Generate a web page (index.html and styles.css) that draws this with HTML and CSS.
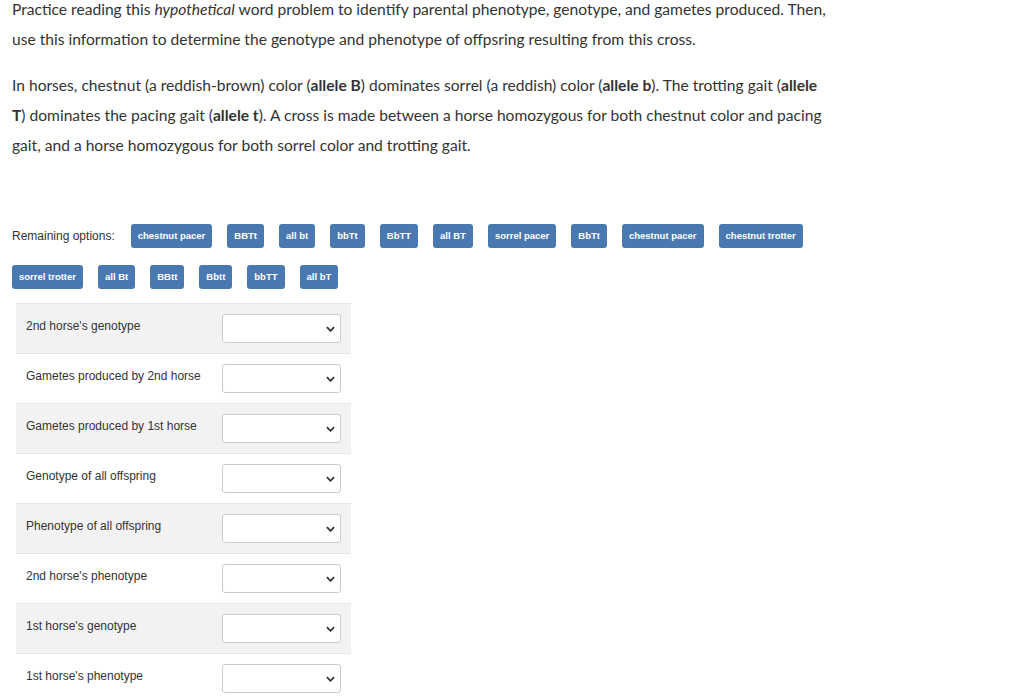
FILE: index.html
```html
<!DOCTYPE html>
<html lang="en">
<head>
    <meta charset="UTF-8">
    <meta name="viewport" content="width=device-width, initial-scale=1.0">
    <title>Horse cross</title>
    <link rel="stylesheet" href="styles.css">
</head>
<body>
<div class="problem">
    <p>Practice reading this <em>hypothetical</em> word problem to identify parental phenotype, genotype, and gametes produced. Then, use this information to determine the genotype and phenotype of offpsring resulting from this cross.</p>
    <p>In horses, chestnut (a reddish-brown) color (<b>allele B</b>) dominates sorrel (a reddish) color (<b>allele b</b>). The trotting gait (<b>allele T</b>) dominates the pacing gait (<b>allele t</b>). A cross is made between a horse homozygous for both chestnut color and pacing gait, and a horse homozygous for both sorrel color and trotting gait.</p>
</div>

<div class="options">
    <span class="options-label">Remaining options:</span>
    <span class="chip">chestnut pacer</span>
    <span class="chip">BBTt</span>
    <span class="chip">all bt</span>
    <span class="chip">bbTt</span>
    <span class="chip">BbTT</span>
    <span class="chip">all BT</span>
    <span class="chip">sorrel pacer</span>
    <span class="chip">BbTt</span>
    <span class="chip">chestnut pacer</span>
    <span class="chip">chestnut trotter</span>
    <span class="chip">sorrel trotter</span>
    <span class="chip">all Bt</span>
    <span class="chip">BBtt</span>
    <span class="chip">Bbtt</span>
    <span class="chip">bbTT</span>
    <span class="chip">all bT</span>
</div>

<table class="answers">
    <tr><td class="question">2nd horse's genotype</td><td><div class="pick"><select></select><svg viewBox="0 0 10 6"><path d="M1 1l4 4 4-4" /></svg></div></td></tr>
    <tr><td class="question">Gametes produced by 2nd horse</td><td><div class="pick"><select></select><svg viewBox="0 0 10 6"><path d="M1 1l4 4 4-4" /></svg></div></td></tr>
    <tr><td class="question">Gametes produced by 1st horse</td><td><div class="pick"><select></select><svg viewBox="0 0 10 6"><path d="M1 1l4 4 4-4" /></svg></div></td></tr>
    <tr><td class="question">Genotype of all offspring</td><td><div class="pick"><select></select><svg viewBox="0 0 10 6"><path d="M1 1l4 4 4-4" /></svg></div></td></tr>
    <tr><td class="question">Phenotype of all offspring</td><td><div class="pick"><select></select><svg viewBox="0 0 10 6"><path d="M1 1l4 4 4-4" /></svg></div></td></tr>
    <tr><td class="question">2nd horse's phenotype</td><td><div class="pick"><select></select><svg viewBox="0 0 10 6"><path d="M1 1l4 4 4-4" /></svg></div></td></tr>
    <tr><td class="question">1st horse's genotype</td><td><div class="pick"><select></select><svg viewBox="0 0 10 6"><path d="M1 1l4 4 4-4" /></svg></div></td></tr>
    <tr><td class="question">1st horse's phenotype</td><td><div class="pick"><select></select><svg viewBox="0 0 10 6"><path d="M1 1l4 4 4-4" /></svg></div></td></tr>
</table>
</body>
</html>
```

FILE: styles.css
```css
body{
    margin: 0;
    padding: 0 12px;
    color: #333;
    font-family: Lato, "Open Sans", sans-serif;
}
.problem{
    margin-top: -6px;
    width: 818px;
    font-size: 15.6px;
    line-height: 30px;
}
.problem p{
    margin: 0 0 16px;
}
.problem b{
    font-weight: 700;
}

.options{
    display: flex;
    flex-wrap: wrap;
    align-items: center;
    row-gap: 17px;
    column-gap: 15px;
    width: 800px;
    margin-top: 64px;
    font-family: "Liberation Sans", Arial, sans-serif;
}
.options-label{
    font-size: 12px;
    margin-right: 1px;
}
.chip{
    display: inline-block;
    padding: 0 7px;
    height: 24px;
    line-height: 24px;
    background-color: #4a79b1;
    color: white;
    font-size: 9.5px;
    font-weight: bold;
    border-radius: 3px;
}

.answers{
    border-collapse: collapse;
    margin: 14px 0 0 4px;
    width: 335px;
    font-family: "Liberation Sans", Arial, sans-serif;
    font-size: 12px;
}
.answers tr{
    height: 50px;
    border-top: 1px solid #e6e6e6;
}
.answers tr:nth-child(odd){
    background-color: #f2f2f2;
}
.answers td{
    padding: 0 10px;
    vertical-align: middle;
}
.answers .question{
    width: 186px;
    padding-bottom: 6px;
    white-space: nowrap;
}
.pick{
    position: relative;
    width: 119px;
    height: 29px;
}
.pick select{
    appearance: none;
    width: 100%;
    height: 100%;
    background: white;
    border: 1px solid #ccc;
    border-radius: 3px;
}
.pick svg{
    position: absolute;
    right: 6px;
    top: 12px;
    width: 9px;
    height: 6px;
    fill: none;
    stroke: #333;
    stroke-width: 2;
}
```
